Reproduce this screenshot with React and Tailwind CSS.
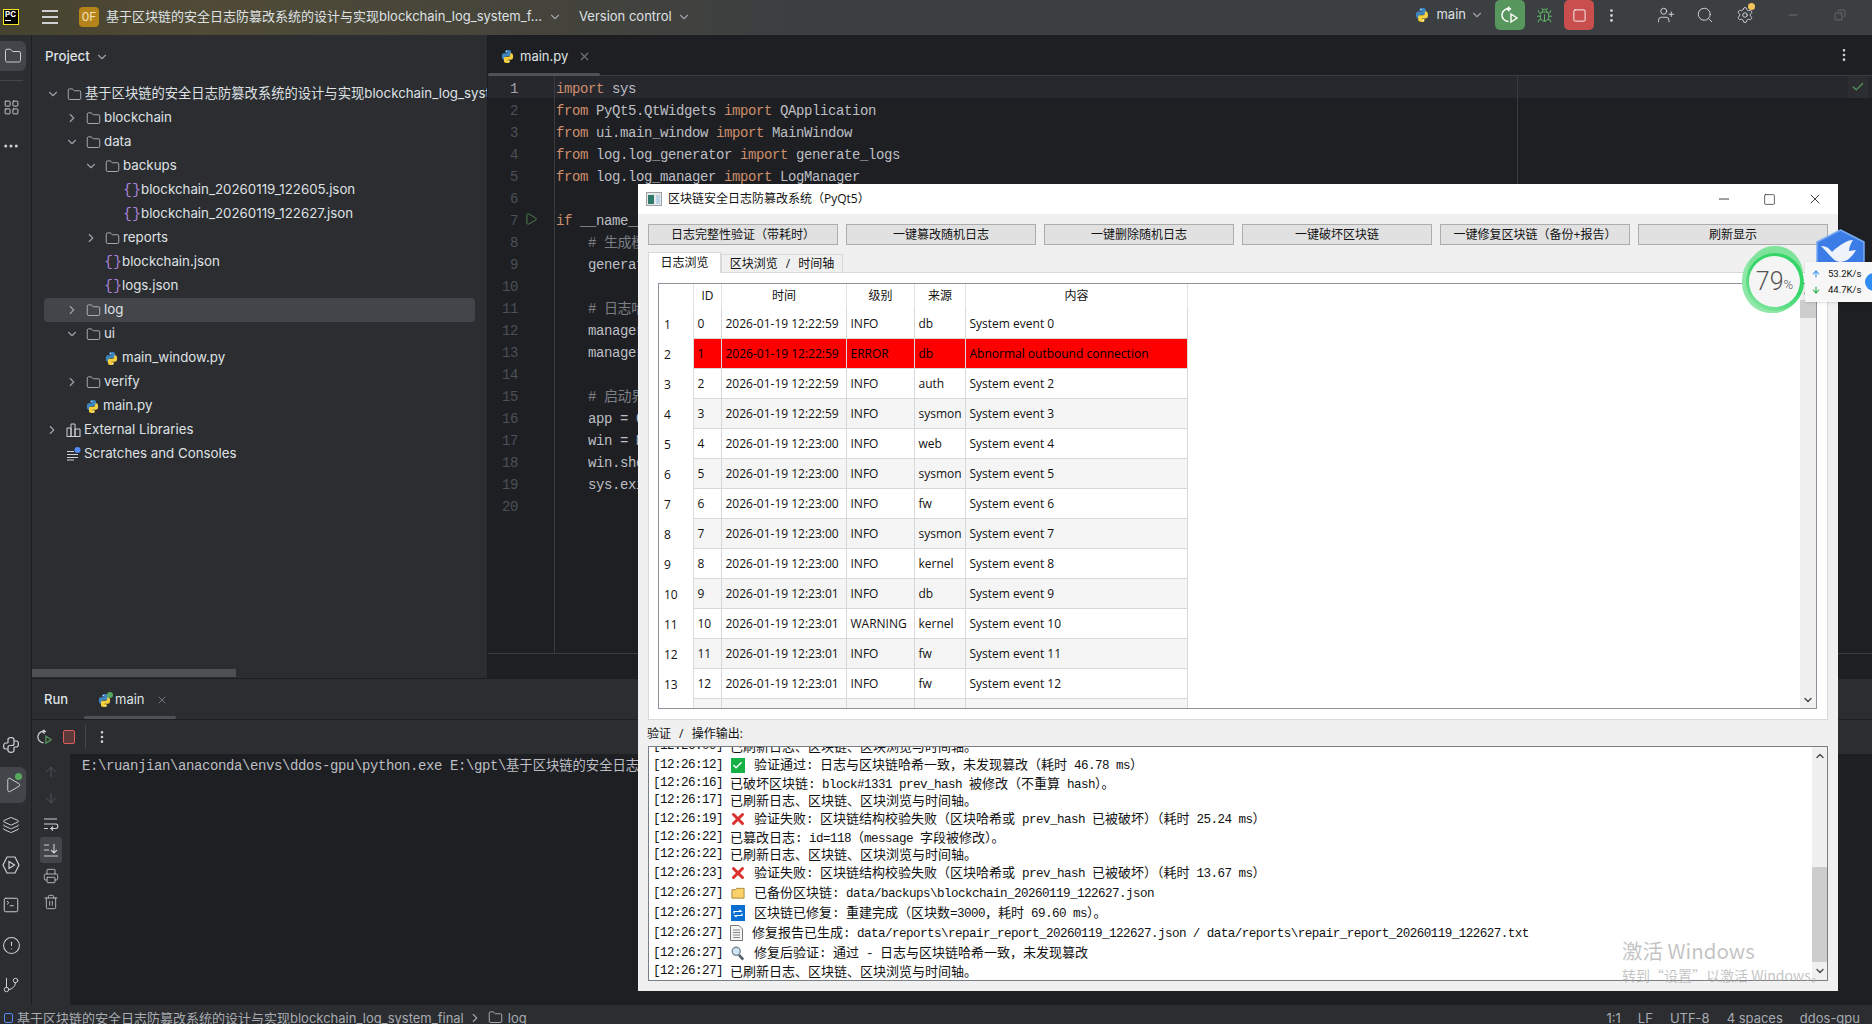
import React from "react";
import {
  ArrowDown, ArrowUp, Bug, Check, ChevronDown, ChevronRight, ChevronUp, CircleAlert, Copy, Ellipsis,
  EllipsisVertical, Folder, GitBranch, Layers, LayoutGrid, Minus, Play, Printer, Search,
  Settings, Square, SquareTerminal, Trash2, UserPlus, X,
} from "lucide-react";

const UI_FONT = "font-['Inter','Noto_Sans_CJK_SC',sans-serif]";
const QT_FONT = "font-['Open_Sans','Noto_Sans_CJK_SC',sans-serif]";
const CODE_FONT = "font-['Liberation_Mono','Noto_Sans_CJK_SC',monospace]";

const TREE = [
  { d: 0, kind: "folder", open: true, text: "基于区块链的安全日志防篡改系统的设计与实现blockchain_log_system_final" },
  { d: 1, kind: "folder", open: false, text: "blockchain" },
  { d: 1, kind: "folder", open: true, text: "data" },
  { d: 2, kind: "folder", open: true, text: "backups" },
  { d: 3, kind: "json", text: "blockchain_20260119_122605.json" },
  { d: 3, kind: "json", text: "blockchain_20260119_122627.json" },
  { d: 2, kind: "folder", open: false, text: "reports" },
  { d: 2, kind: "json", text: "blockchain.json" },
  { d: 2, kind: "json", text: "logs.json" },
  { d: 1, kind: "folder", open: false, text: "log", selected: true },
  { d: 1, kind: "folder", open: true, text: "ui" },
  { d: 2, kind: "py", text: "main_window.py" },
  { d: 1, kind: "folder", open: false, text: "verify" },
  { d: 1, kind: "py", text: "main.py" },
];

const CODE = [
  [["k", "import"], ["p", " sys"]],
  [["k", "from"], ["p", " PyQt5.QtWidgets "], ["k", "import"], ["p", " QApplication"]],
  [["k", "from"], ["p", " ui.main_window "], ["k", "import"], ["p", " MainWindow"]],
  [["k", "from"], ["p", " log.log_generator "], ["k", "import"], ["p", " generate_logs"]],
  [["k", "from"], ["p", " log.log_manager "], ["k", "import"], ["p", " LogManager"]],
  [],
  [["k", "if"], ["p", " __name__ == \"__main__\":"]],
  [["c", "    # 生成模拟日志"]],
  [["p", "    generate_logs()"]],
  [],
  [["c", "    # 日志哈希上链"]],
  [["p", "    manager = LogManager()"]],
  [["p", "    manager.load()"]],
  [],
  [["c", "    # 启动界面"]],
  [["p", "    app = QApplication(sys.argv)"]],
  [["p", "    win = MainWindow()"]],
  [["p", "    win.show()"]],
  [["p", "    sys.exit(app.exec_())"]],
  [],
];

const LOGS = [
  ["0", "2026-01-19 12:22:59", "INFO", "db", "System event 0"],
  ["1", "2026-01-19 12:22:59", "ERROR", "db", "Abnormal outbound connection"],
  ["2", "2026-01-19 12:22:59", "INFO", "auth", "System event 2"],
  ["3", "2026-01-19 12:22:59", "INFO", "sysmon", "System event 3"],
  ["4", "2026-01-19 12:23:00", "INFO", "web", "System event 4"],
  ["5", "2026-01-19 12:23:00", "INFO", "sysmon", "System event 5"],
  ["6", "2026-01-19 12:23:00", "INFO", "fw", "System event 6"],
  ["7", "2026-01-19 12:23:00", "INFO", "sysmon", "System event 7"],
  ["8", "2026-01-19 12:23:00", "INFO", "kernel", "System event 8"],
  ["9", "2026-01-19 12:23:01", "INFO", "db", "System event 9"],
  ["10", "2026-01-19 12:23:01", "WARNING", "kernel", "System event 10"],
  ["11", "2026-01-19 12:23:01", "INFO", "fw", "System event 11"],
  ["12", "2026-01-19 12:23:01", "INFO", "fw", "System event 12"],
  ["13", "2026-01-19 12:23:01", "INFO", "db", "System event 13"],
];

const OUTPUT = [
  { t: "12:26:12", icon: "ok", text: "验证通过: 日志与区块链哈希一致\uff0c未发现篡改\uff08耗时 46.78 ms\uff09" },
  { t: "12:26:16", text: "已破坏区块链: block#1331 prev_hash 被修改\uff08不重算 hash\uff09。" },
  { t: "12:26:17", text: "已刷新日志、区块链、区块浏览与时间轴。" },
  { t: "12:26:19", icon: "bad", text: "验证失败: 区块链结构校验失败\uff08区块哈希或 prev_hash 已被破坏\uff09\uff08耗时 25.24 ms\uff09" },
  { t: "12:26:22", text: "已篡改日志: id=118\uff08message 字段被修改\uff09。" },
  { t: "12:26:22", text: "已刷新日志、区块链、区块浏览与时间轴。" },
  { t: "12:26:23", icon: "bad", text: "验证失败: 区块链结构校验失败\uff08区块哈希或 prev_hash 已被破坏\uff09\uff08耗时 13.67 ms\uff09" },
  { t: "12:26:27", icon: "folder", text: "已备份区块链: data/backups\\blockchain_20260119_122627.json" },
  { t: "12:26:27", icon: "repeat", text: "区块链已修复: 重建完成\uff08区块数=3000\uff0c耗时 69.60 ms\uff09。" },
  { t: "12:26:27", icon: "doc", text: "修复报告已生成: data/reports\\repair_report_20260119_122627.json / data/reports\\repair_report_20260119_122627.txt" },
  { t: "12:26:27", icon: "search", text: "修复后验证: 通过 - 日志与区块链哈希一致\uff0c未发现篡改" },
  { t: "12:26:27", text: "已刷新日志、区块链、区块浏览与时间轴。" },
];

const COLS = ["w-[28px]", "w-[125px]", "w-[68px]", "w-[51px]", "w-[222px]"];
const HEADS = ["ID", "时间", "级别", "来源", "内容"];

function PyIcon({ size = 16 }) {
  const blue = "M7.9 1C5.4 1 5.6 2.1 5.6 2.1V4h2.4v.6H4.2S2 4.3 2 7.9s2 3.5 2 3.5h1.1V9.7s0-2 2-2h2.8s1.9 0 1.9-1.8V2.9S12 1 7.9 1z";
  return (
    <svg width={size} height={size} viewBox="0 0 16 16" className="shrink-0">
      <path d={blue} fill="#3f86c0" />
      <path d={blue} fill="#f5cf3e" transform="rotate(180 8 8)" />
      <circle cx="6.9" cy="2.6" r=".6" fill="#fff" />
      <circle cx="9.1" cy="13.4" r=".6" fill="#fff" />
    </svg>
  );
}

// rerun arrow with the small play triangle, top bar and run toolbar share it
function RerunIcon({ size = 18, color = "#fff", play = "#fff" }) {
  return (
    <svg width={size} height={size} viewBox="0 0 18 18" fill="none" strokeWidth="1.4">
      <path d="M7.5 15.5A6.5 6.5 0 1 1 10 3H6.5" stroke={color} />
      <path d="M8.5 .8L6.2 3L8.5 5.2" stroke={color} />
      <path d="M10 8V16L16 12z" stroke={play} />
    </svg>
  );
}

function JsonIcon() {
  return (
    <span className={`w-[14px] shrink-0 text-center text-[15px] leading-none text-[#a781d6] ${CODE_FONT}`}>{"{}"}</span>
  );
}

// CJK runs are wider than the mono font gives, so they get their own size
function Mixed({ text }) {
  return text.split(/([\u3000-\u9fff\uff00-\uffef]+)/).map((part, i) =>
    i % 2 ? (
      <span key={i} className="font-['Noto_Sans_CJK_SC',sans-serif] text-[13px] tracking-normal">{part}</span>
    ) : (
      <span key={i}>{part}</span>
    ),
  );
}

function Emoji({ kind }) {
  if (kind === "ok") {
    return (
      <span className="flex h-[15px] w-[14px] items-center justify-center bg-[#16b045]">
        <Check size={11} color="#fff" strokeWidth={3} />
      </span>
    );
  }
  if (kind === "bad") return <X size={18} color="#d9322e" strokeWidth={4} className="-mx-[2px] shrink-0" />;
  if (kind === "folder") {
    return (
      <svg width="15" height="14" viewBox="0 0 15 14">
        <path d="M1 3.5V12.5H14V2H6L5 3.5z" fill="#fbd26a" stroke="#a8853a" />
      </svg>
    );
  }
  if (kind === "repeat") {
    return (
      <span className="flex h-[16px] w-[14px] items-center justify-center bg-[#0a6fd0]">
        <svg width="10" height="9" viewBox="0 0 10 9" fill="none" stroke="#fff" strokeWidth="1.2">
          <path d="M1 4.5V2.5H8L6.5 1M9 4.5V6.5H2L3.5 8" />
        </svg>
      </span>
    );
  }
  if (kind === "doc") {
    return (
      <svg width="13" height="16" viewBox="0 0 13 16" className="-ml-[2px]">
        <path d="M.5.5H9L12.5 4V15.5H.5z" fill="#f4f4f4" stroke="#777" />
        <path d="M3 5H10M3 7.5H10M3 10H10M3 12.5H10" stroke="#888" />
      </svg>
    );
  }
  return (
    <svg width="16" height="17" viewBox="0 0 16 17" fill="none">
      <path d="M9 10L14 15.5" stroke="#55606a" strokeWidth="3" />
      <circle cx="6" cy="6" r="4.6" fill="#cfe4f5" stroke="#7a8b98" strokeWidth="1.6" />
    </svg>
  );
}

function TreeRow({ row }) {
  const left = 2 + row.d * 19;
  return (
    <div
      style={{ paddingLeft: left }}
      className={`flex h-6 w-[431px] items-center whitespace-nowrap rounded-[4px] ${row.selected ? "bg-[#43454a]" : ""}`}
    >
      {row.kind === "folder" ? (
        <>
          <span className="flex w-[14px] shrink-0 justify-center">
            {row.open ? <ChevronDown size={14} color="#9da0a8" /> : <ChevronRight size={14} color="#9da0a8" />}
          </span>
          <Folder size={15} color="#ced0d6" strokeWidth={1.2} className="ml-[7px] shrink-0" />
          <span className="ml-[3px]">{row.text}</span>
        </>
      ) : (
        <>
          <span className="flex w-[14px] shrink-0" />
          <span className="ml-[5px] flex w-[16px] shrink-0 justify-center">
            {row.kind === "py" ? <PyIcon size={15} /> : <JsonIcon />}
          </span>
          <span className="ml-[3px]">{row.text}</span>
        </>
      )}
    </div>
  );
}

function Rail() {
  const cls = "#ced0d6";
  const slot = "flex h-10 w-[22px] items-center justify-center";
  return (
    <div className="flex w-8 shrink-0 flex-col items-start border-r border-[#1e1f22] bg-[#2b2d30]">
      <div className="mt-[6px] flex h-[30px] w-[26px] items-center justify-center rounded-r-[6px] bg-[#43454a]">
        <Folder size={18} color={cls} strokeWidth={1.3} />
      </div>
      <div className="mt-[9px] h-px w-[23px] bg-[#43454a]" />
      <div className="mt-[18px] flex w-[22px] justify-center"><LayoutGrid size={17} color={cls} strokeWidth={1.3} /></div>
      <div className="mt-[21px] flex w-[22px] justify-center"><Ellipsis size={18} color={cls} /></div>
      <div className="mt-auto flex flex-col">
        <div className={slot}>
          <svg width="18" height="18" viewBox="0 0 18 18" fill="none" stroke={cls} strokeWidth="1.2">
            <path d="M6 7V3.5C6 1 12 1 12 3.5V7.5C12 9 11 9.5 10 9.5H8C7 9.5 6 10 6 11.5V14.5C6 17 12 17 12 14.5V11M12 5H14.5C17 5 17 11 14.5 11H12M6 7H3.5C1 7 1 13 3.5 13H6" />
          </svg>
        </div>
        <div className="flex h-10 items-center">
          <div className="relative flex h-[36px] w-[26px] items-center justify-center rounded-r-[6px] bg-[#43454a]">
            <Play size={18} color={cls} strokeWidth={1.3} />
            <span className="absolute right-[4px] top-[6px] h-[7px] w-[7px] rounded-full bg-[#57a85f]" />
          </div>
        </div>
        <div className={slot}><Layers size={18} color={cls} strokeWidth={1.3} /></div>
        <div className={slot}>
          <svg width="18" height="20" viewBox="0 0 18 20" fill="none" stroke={cls} strokeWidth="1.2">
            <path d="M5 2H13L17 10L13 18H5L1 10z" />
            <path d="M7 6.5L12.5 10L7 13.5z" />
          </svg>
        </div>
        <div className={slot}><SquareTerminal size={18} color={cls} strokeWidth={1.3} /></div>
        <div className={slot}><CircleAlert size={19} color={cls} strokeWidth={1.3} /></div>
        <div className={slot}><GitBranch size={18} color={cls} strokeWidth={1.3} /></div>
      </div>
    </div>
  );
}

function TitleBar() {
  return (
    <div className={`flex h-[35px] shrink-0 items-center bg-[linear-gradient(90deg,#45422f_0,#504b36_200px,#3c3f41_800px)] pb-[2px] text-[13px] text-[#dfe1e5] ${UI_FONT}`}>
      <div className="ml-[3px] flex h-4 w-4 flex-col border border-[#f5e622] bg-black px-px">
        <span className="text-[8px] font-bold leading-[9px] text-white">PC</span>
        <span className="mt-[1px] h-px w-[6px] bg-white" />
      </div>
      <div className="ml-[23px] flex w-4 flex-col gap-[4px]">
        <span className="h-[2px] bg-[#ced0d6]" /><span className="h-[2px] bg-[#ced0d6]" /><span className="h-[2px] bg-[#ced0d6]" />
      </div>
      <div className="ml-[21px] flex h-5 w-5 items-center justify-center rounded-[4px] bg-[#b5831a] text-[12px] text-[#f2e2b8]">0F</div>
      <span className="ml-[7px] w-[437px] truncate whitespace-nowrap">基于区块链的安全日志防篡改系统的设计与实现blockchain_log_system_f...</span>
      <ChevronDown size={14} color="#9da0a8" className="ml-[5px]" />
      <span className="ml-[17px] whitespace-nowrap">Version control</span>
      <ChevronDown size={14} color="#9da0a8" className="ml-[5px]" />
      <div className="ml-auto flex h-[30px] items-center self-start">
        <PyIcon size={16} />
        <span className="ml-[6px]">main</span>
        <ChevronDown size={14} color="#9da0a8" className="ml-[4px]" />
        <div className="ml-[11px] flex h-[30px] w-[30px] items-center justify-center rounded-[5px] bg-[#57965c]">
          <RerunIcon />
        </div>
        <Bug size={17} color="#5fb865" strokeWidth={1.4} className="ml-[11px]" />
        <div className="ml-[11px] flex h-[30px] w-[30px] items-center justify-center rounded-[5px] bg-[#c94f4f]">
          <Square size={15} color="#fff" strokeWidth={1.4} />
        </div>
        <EllipsisVertical size={17} color="#ced0d6" className="ml-[9px]" />
        <UserPlus size={18} color="#ced0d6" strokeWidth={1.3} className="ml-[37px]" />
        <Search size={18} color="#ced0d6" strokeWidth={1.3} className="ml-[21px]" />
        <div className="relative ml-[22px]">
          <Settings size={18} color="#ced0d6" strokeWidth={1.3} />
          <span className="absolute -right-[1px] -top-[3px] h-[7px] w-[7px] rounded-full bg-[#f2c55c]" />
        </div>
        <Minus size={14} color="#8a8c90" strokeWidth={1} className="ml-[32px]" />
        <Copy size={12} color="#8a8c90" strokeWidth={1} className="ml-[34px] mr-[26px] -scale-x-100" />
      </div>
    </div>
  );
}

function Project() {
  return (
    <div className={`relative flex w-[456px] shrink-0 flex-col overflow-hidden border-r border-[#1e1f22] bg-[#2b2d30] text-[13.3px] text-[#dfe1e5] ${UI_FONT}`}>
      <div className="flex h-[41px] shrink-0 items-center pl-[13px] pt-[2px] font-medium">
        Project
        <ChevronDown size={14} color="#9da0a8" className="ml-[5px]" />
      </div>
      <div className="ml-3 mt-[6px] overflow-hidden">
        {TREE.map(r => <TreeRow key={r.text} row={r} />)}
        <div className="flex h-6 items-center">
          <ChevronRight size={14} color="#9da0a8" className="ml-[1px] shrink-0" />
          <svg width="15" height="14" viewBox="0 0 15 14" fill="none" stroke="#ced0d6" className="ml-[7px] shrink-0">
            <path d="M1 13V5H5V13M5 13V1H9V13M9 13V6H14V13M.5 13.5H14.5" />
          </svg>
          <span className="ml-[3px] whitespace-nowrap">External Libraries</span>
        </div>
        <div className="flex h-6 items-center pl-[22px]">
          <svg width="15" height="14" viewBox="0 0 15 14" fill="none" stroke="#ced0d6" className="shrink-0">
            <path d="M1 4.5H8M1 7.5H12M1 10.5H12M1 13H8" />
            <circle cx="11.5" cy="3" r="3" fill="#548af7" stroke="none" />
          </svg>
          <span className="ml-[3px] whitespace-nowrap">Scratches and Consoles</span>
        </div>
      </div>
      <div className="absolute bottom-[1px] left-0 h-2 w-[204px] bg-[#4e5054]" />
    </div>
  );
}

function Editor() {
  return (
    <div className={`flex min-w-0 flex-1 flex-col bg-[#1e1f22] ${CODE_FONT}`}>
      <div className={`relative flex h-[41px] shrink-0 items-center border-b border-[#393b40] pt-[3px] text-[13px] text-[#dfe1e5] ${UI_FONT}`}>
        <div className="ml-[7px] flex items-center">
          <span className="ml-[5px]"><PyIcon size={15} /></span>
          <span className="ml-[5px]">main.py</span>
          <X size={13} color="#6f737a" className="ml-[10px]" />
        </div>
        <div className="absolute -bottom-px left-0 h-[3px] w-[112px] rounded-sm bg-[#4e5157]" />
        <EllipsisVertical size={16} color="#ced0d6" className="absolute right-[20px] top-[12px]" />
      </div>
      <div className="relative flex h-[578px] shrink-0 border-b border-[#393b40]">
        <div className="absolute left-0 right-0 top-0 h-[22px] bg-[#26282e]" />
        <div className="absolute bottom-0 left-[1029px] top-0 w-px bg-[#393b40]" />
        <div className="absolute right-[4px] top-0 flex h-[22px] w-[20px] items-center justify-center bg-[#2b2d30]">
          <Check size={14} color="#57965c" strokeWidth={2.2} />
        </div>
        <div className="relative w-[67px] shrink-0 border-r border-[#393b40] pt-[2px] text-[14px] leading-[22px] tracking-[-0.4px] text-[#4b5059]">
          {CODE.map((_, i) => (
            <div key={i} className={`h-[22px] w-[30px] text-right ${i === 0 ? "text-[#a1a3ab]" : ""}`}>{i + 1}</div>
          ))}
          <Play size={14} color="#57965c" strokeWidth={1.4} className="absolute left-[36px] top-[136px]" />
        </div>
        <div className="relative ml-[1px] whitespace-pre pt-[2px] text-[14px] leading-[22px] tracking-[-0.4px] text-[#bcbec4]">
          {CODE.map((line, i) => (
            <div key={i} className="h-[22px]">
              {line.map(([k, s], j) => (
                <span key={j} className={k === "k" ? "text-[#cf8e6d]" : k === "c" ? "text-[#7a7e85]" : ""}>{s}</span>
              ))}
            </div>
          ))}
        </div>
      </div>
    </div>
  );
}

function RunPanel() {
  return (
    <div className="flex h-[327px] shrink-0 flex-col border-t border-[#1e1f22] bg-[#2b2d30]">
      <div className={`flex h-[41px] shrink-0 items-center border-b border-[#1e1f22] pt-[2px] text-[13px] text-[#dfe1e5] ${UI_FONT}`}>
        <span className="ml-[12px] w-[28px] font-medium">Run</span>
        <div className="relative ml-[12px] flex h-full w-[92px] items-center pl-[13px]">
          <span className="relative">
            <PyIcon size={15} />
            <span className="absolute -right-[1px] -top-[1px] h-[6px] w-[6px] rounded-full bg-[#57a85f]" />
          </span>
          <span className="ml-[3px]">main</span>
          <X size={12} color="#6f737a" className="ml-[11px]" />
          <div className="absolute bottom-0 left-0 right-0 h-[3px] rounded-sm bg-[#4e5157]" />
        </div>
      </div>
      <div className="flex h-[34px] shrink-0 items-center">
        <span className="ml-[5px]"><RerunIcon size={16} color="#ced0d6" play="#57965c" /></span>
        <div className="ml-[10px] h-[14px] w-[12px] rounded-[2px] border border-[#db5c5c] bg-[#5c3a3a]" />
        <div className="ml-[10px] h-6 w-px bg-[#43454a]" />
        <EllipsisVertical size={16} color="#ced0d6" className="ml-[8px]" />
      </div>
      <div className="flex min-h-0 flex-1">
        <div className="flex w-[38px] shrink-0 flex-col items-center gap-[10px] pt-[10px]">
          <ArrowUp size={16} color="#55585e" strokeWidth={1.3} />
          <ArrowDown size={16} color="#55585e" strokeWidth={1.3} />
          <svg width="16" height="16" viewBox="0 0 16 16" fill="none" stroke="#ced0d6" strokeWidth="1.1">
            <path d="M1 3H14M1 8H13C15.5 8 15.5 12.5 13 12.5H8L10 10.5M8 12.5L10 14.5M1 12.5H5" />
          </svg>
          <div className="-my-[5px] flex h-[26px] w-[22px] items-center justify-center rounded-[3px] bg-[#43454a]">
            <svg width="16" height="16" viewBox="0 0 16 16" fill="none" stroke="#ced0d6" strokeWidth="1.1">
              <path d="M1 3H6M1 8H6M1 14H15M11 2V11M8 8L11 11L14 8" />
            </svg>
          </div>
          <Printer size={16} color="#ced0d6" strokeWidth={1.2} />
          <Trash2 size={16} color="#ced0d6" strokeWidth={1.2} />
        </div>
        <div className={`min-w-0 flex-1 overflow-hidden whitespace-pre bg-[#1e1f22] pl-[12px] pt-[1px] text-[14px] leading-[22px] tracking-[-0.4px] text-[#bcbec4] ${CODE_FONT}`}>
          {"E:\\ruanjian\\anaconda\\envs\\ddos-gpu\\python.exe E:\\gpt\\"}
          <span className="text-[13.3px] tracking-normal">基于区块链的安全日志防篡改系统的设计与实现</span>
          {"blockchain_log_system_final\\main.py"}
        </div>
      </div>
    </div>
  );
}

function StatusBar() {
  return (
    <div className={`flex h-[19px] shrink-0 items-start overflow-hidden bg-[#2b2d30] pt-[5px] text-[13px] leading-4 text-[#a8abb0] ${UI_FONT}`}>
      <span className="ml-[4px] mt-[3px] h-[10px] w-[9px] rounded-[2px] border border-[#548af7]" />
      <span className="ml-[4px] whitespace-nowrap">基于区块链的安全日志防篡改系统的设计与实现blockchain_log_system_final</span>
      <ChevronRight size={14} color="#9da0a8" className="ml-[4px] mt-[1px]" />
      <Folder size={15} color="#ced0d6" strokeWidth={1.2} className="ml-[6px]" />
      <span className="ml-[5px]">log</span>
      <div className="ml-auto mr-[12px] flex gap-[17px] whitespace-nowrap">
        <span>1:1</span><span>LF</span><span>UTF-8</span><span>4 spaces</span><span>ddos-gpu</span>
      </div>
    </div>
  );
}

function LogTable() {
  return (
    <div className="flex h-[426px] border border-[#8f929b] bg-white text-[12px] text-[#111]">
      <div className="min-w-0 flex-1 overflow-hidden">
        <div className="flex h-[25px]">
          <div className="w-[35px] shrink-0 border-r border-[#e4e4e4]" />
          {HEADS.map((h, i) => (
            <div key={h} className={`${COLS[i]} shrink-0 border-r border-[#e4e4e4] pt-[3px] text-center`}>{h}</div>
          ))}
        </div>
        {LOGS.map((row, r) => {
          const red = row[2] === "ERROR";
          const rowBg = red ? "bg-[#ff0000] text-black" : r % 2 ? "bg-[#f5f5f5]" : "bg-white";
          return (
            <div key={r} className="flex h-[30px]">
              <div className="flex w-[35px] shrink-0 items-center border-r border-[#dcdcdc] pl-[5px] pt-[2px]">{r + 1}</div>
              {row.map((c, i) => (
                <div
                  key={i}
                  className={`${COLS[i]} ${rowBg} flex shrink-0 items-center whitespace-nowrap border-b border-r border-[#d8d8d8] pl-[3.5px]`}
                >
                  {c}
                </div>
              ))}
            </div>
          );
        })}
      </div>
      <div className="flex w-4 shrink-0 flex-col items-center bg-[#f0f0f0]">
        <ChevronUp size={12} color="#505050" strokeWidth={3} className="mt-[2px]" />
        <div className="mt-[2px] h-[18px] w-full bg-[#cdcdcd]" />
        <ChevronDown size={12} color="#505050" strokeWidth={3} className="mb-[2px] mt-auto" />
      </div>
    </div>
  );
}

function OutputRow({ row }) {
  return (
    <div className={`flex items-center whitespace-pre ${row.icon ? "h-[20px]" : "h-[17px]"}`}>
      <span>[{row.t}]</span>
      {row.icon ? (
        <>
          <span className="ml-[8px] flex w-[14px] shrink-0 justify-center"><Emoji kind={row.icon} /></span>
          <span className={row.icon === "doc" ? "ml-[7px]" : "ml-[9px]"}><Mixed text={row.text} /></span>
        </>
      ) : (
        <span className="ml-[7px]"><Mixed text={row.text} /></span>
      )}
    </div>
  );
}

function Output() {
  return (
    <div className="relative flex h-[235px] shrink-0 border border-[#7a7e85] bg-white">
      <div className={`min-w-0 flex-1 overflow-hidden pl-[4px] text-[12.6px] tracking-[-0.56px] text-[#111] ${CODE_FONT}`}>
        <div className="-mt-[9px]">
          <OutputRow row={{ t: "12:26:09", text: "已刷新日志、区块链、区块浏览与时间轴。" }} />
          {OUTPUT.map((row, i) => <OutputRow key={i} row={row} />)}
        </div>
      </div>
      <div className="flex w-[15px] shrink-0 flex-col items-center bg-[#f0f0f0]">
        <ChevronUp size={12} color="#505050" strokeWidth={3} className="mt-[3px]" />
        <div className="mt-[105px] h-[95px] w-full bg-[#cdcdcd]" />
        <ChevronDown size={12} color="#505050" strokeWidth={3} className="mt-[3px]" />
      </div>
    </div>
  );
}

function QtWindow() {
  const buttons = ["日志完整性验证\uff08带耗时\uff09", "一键篡改随机日志", "一键删除随机日志", "一键破坏区块链", "一键修复区块链\uff08备份+报告\uff09", "刷新显示"];
  return (
    <div className={`absolute left-[638px] top-[184px] flex h-[807px] w-[1200px] flex-col bg-[#f0f0f0] text-[12px] text-[#111] ${QT_FONT}`}>
      <div className="flex h-[30px] shrink-0 items-center bg-white pl-[8px]">
        <svg width="16" height="14" viewBox="0 0 16 14">
          <rect x=".5" y=".5" width="15" height="13" fill="#e6e8ea" stroke="#9aa0a4" />
          <rect x="2" y="3" width="6" height="9" fill="#2f7a6b" />
          <rect x="10" y="3" width="4" height="9" fill="#bcd4e6" />
        </svg>
        <span className="ml-[6px]">{"区块链安全日志防篡改系统\uff08PyQt5\uff09"}</span>
        <Minus size={16} color="#111" strokeWidth={1.2} className="ml-auto mr-[31px]" />
        <Square size={13} color="#111" strokeWidth={1.2} className="mr-[31px]" />
        <X size={16} color="#111" strokeWidth={1.2} className="mr-[15px]" />
      </div>
      <div className="flex min-h-0 flex-1 flex-col px-[10px] pt-[10px]">
        <div className="flex h-[21px] shrink-0 gap-2">
          {buttons.map(b => (
            <div key={b} className="flex flex-1 items-center justify-center border border-[#adadad] bg-[#e1e1e1]">{b}</div>
          ))}
        </div>
        <div className="mt-[7px] flex h-5 shrink-0 items-end">
          <div className="z-10 -mb-px flex h-[21px] w-[73px] items-center justify-center border border-b-0 border-[#d9d9d9] bg-white">日志浏览</div>
          <div className="flex h-[18px] w-[122px] items-center justify-center border border-b-0 border-[#d9d9d9] [word-spacing:5px]">区块浏览 / 时间轴</div>
        </div>
        <div className="h-[448px] shrink-0 border border-[#d9d9d9] bg-white pl-[9px] pr-[10px] pt-[10px]">
          <LogTable />
        </div>
        <div className="-ml-px flex h-[26px] shrink-0 items-center pt-[2px] [word-spacing:5px]">验证 / 操作输出:</div>
        <Output />
      </div>
    </div>
  );
}

function Floating() {
  return (
    <>
      {/* 桌面悬浮的网速球 */}
      <svg width="50" height="50" viewBox="0 0 50 50" className="absolute left-[1816px] top-[229px]">
        <path d="M24.5 1L48 13V50H1V13z" fill="#3b7ce6" stroke="#7aaaf4" strokeWidth="1.5" strokeLinejoin="round" />
        <path d="M5 17C10 17 13 19 16 23C20 19 23 17 28 14C31 12 34 11 37 11C35 14 33 18 33 22C35 22 38 21 40 21C37 27 31 33 24 33C18 33 12 24 5 17z" fill="#eef3fb" />
      </svg>
      <div className="absolute left-[1805px] top-[262px] flex h-10 w-[67px] flex-col justify-center gap-[4px] overflow-hidden bg-[#f7f7f7] pl-[6px] font-['Roboto',sans-serif] text-[9.5px] leading-3 text-[#111] shadow">
        <div className="flex items-center gap-[7px]"><ArrowUp size={10} color="#2f8cf0" strokeWidth={2.5} />53.2K/s</div>
        <div className="flex items-center gap-[7px]"><ArrowDown size={10} color="#18a84a" strokeWidth={2.5} />44.7K/s</div>
        <div className="absolute left-[60px] top-[11px] h-[18px] w-[18px] rounded-full bg-[#2f8cf0]" />
      </div>
      <div className="absolute left-[1742px] top-[250px] h-[63px] w-[60px] rounded-[48%] bg-[#8fe8a8]" />
      <div className="absolute left-[1747px] top-[246px] h-[60px] w-[56px] rounded-[48%] bg-[#7fe39c]" />
      <div className="absolute left-[1746px] top-[253px] h-[58px] w-[58px] rounded-full bg-[linear-gradient(30deg,#8fe8a8,#35d568_55%)]" />
      <div className="absolute left-[1749px] top-[256px] flex h-[51px] w-[51px] items-center justify-center rounded-full bg-[#f5f5f5] font-['Roboto',sans-serif] font-light text-[#555]">
        <span className="text-[25px] leading-none">79</span>
        <span className="mt-[6px] text-[13px] leading-none">%</span>
      </div>
      {/* Windows 激活水印 */}
      <div className="pointer-events-none absolute left-[1622px] top-[937px] whitespace-nowrap font-['Noto_Sans_CJK_SC',sans-serif] text-[#a9a9a9]/70">
        <div className="text-[20.5px] leading-[27px]">激活 Windows</div>
        <div className="mt-[1px] text-[14px] leading-[20px]">转到“设置”以激活 Windows。</div>
      </div>
    </>
  );
}

export default function App() {
  return (
    <div className="relative flex h-screen w-full flex-col overflow-hidden bg-[#1e1f22]">
      <TitleBar />
      <div className="flex min-h-0 flex-1">
        <Rail />
        <div className="flex min-w-0 flex-1 flex-col">
          <div className="flex h-[643px] shrink-0">
            <Project />
            <Editor />
          </div>
          <RunPanel />
        </div>
      </div>
      <StatusBar />
      <QtWindow />
      <Floating />
    </div>
  );
}
